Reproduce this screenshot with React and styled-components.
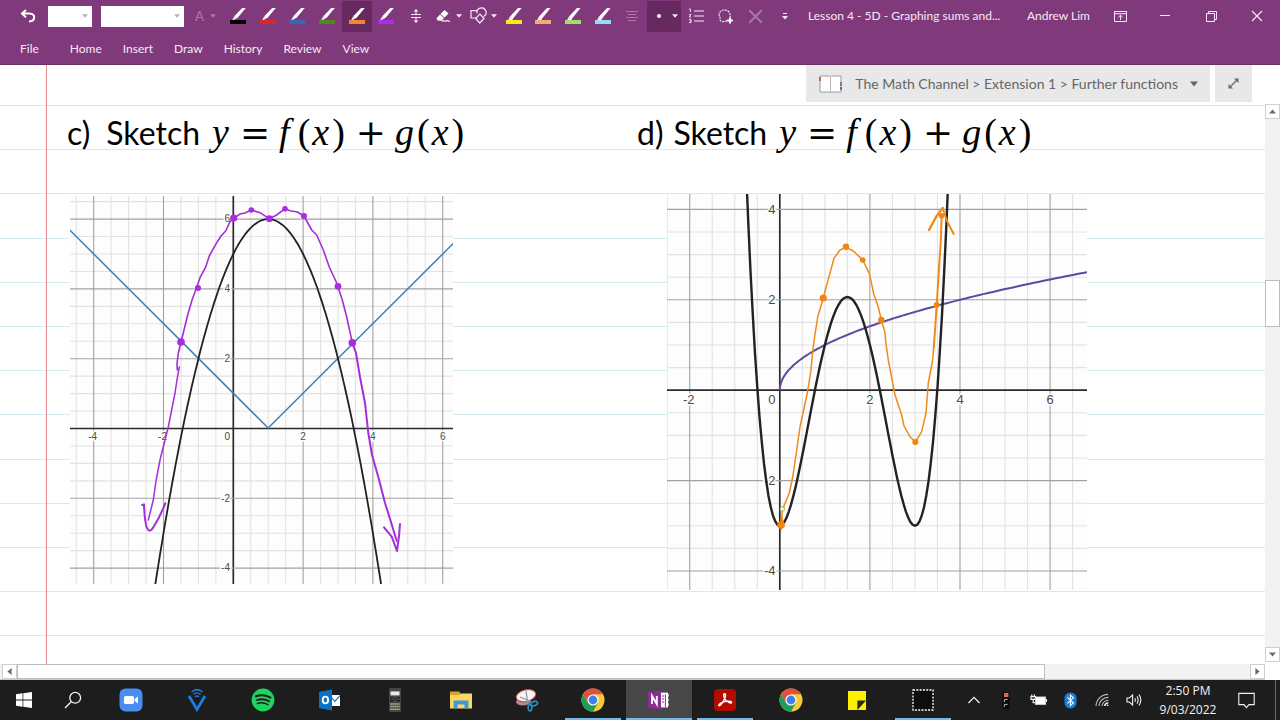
import React from 'react'
import styled, { createGlobalStyle } from 'styled-components'

const GlobalStyle = createGlobalStyle`
* { box-sizing: border-box; }
body {
  margin: 0;
  background: #fff;
  font-family: "Open Sans", "Noto Sans", sans-serif;
}
button, select {
  font-family: inherit;
  border: 0;
  padding: 0;
  background: none;
  color: inherit;
}
svg { display: block; flex: none; }
`

const Window = styled.div`
  display: flex;
  flex-direction: column;
  min-height: 100vh;
`

/* ---------- title bar and ribbon tabs ---------- */

const Header = styled.header`
  background: #80397b;
  color: #f6e9f5;
  border-bottom: 1px solid #6b2f67;
  font-family: Lato, "Open Sans", sans-serif;
`
const TitleBar = styled.div`
  display: flex;
  align-items: center;
  height: 32px;
  padding-left: 13px;
`
const ToolGroup = styled.div`
  display: flex;
  flex: none;
  width: ${p => p.$width}px;
  & > button { flex: 1; }
`
const Tool = styled.button`
  display: flex;
  flex: none;
  align-items: center;
  justify-content: center;
  gap: ${p => p.$gap || 0}px;
  width: ${p => p.$width || 30}px;
  height: 31px;
  background: ${p => p.$active ? '#67295f' : 'none'};
  opacity: ${p => p.$dim ? 0.35 : 1};
`
const FontBox = styled.span`
  display: flex;
  flex: none;
  align-items: center;
  justify-content: flex-end;
  width: ${p => p.$width}px;
  height: 21px;
  margin: 0 4px 0 5px;
  padding-right: 4px;
  background: #fff;
  color: #b9b2b8;
`
const FontSelect = styled.select`
  appearance: none;
  flex: 1;
  min-width: 0;
  height: 100%;
`
const DocTitle = styled.span`
  margin-left: 8px;
  font-size: 12px;
  line-height: 14px;
  white-space: nowrap;
`
const UserName = styled.button`
  margin-right: 8px;
  font-size: 12px;
  line-height: 14px;
  white-space: nowrap;
`
const WindowButtons = styled.div`
  display: flex;
  margin-left: auto;
`
const Tabs = styled.nav`
  display: flex;
  height: 32px;
  padding-left: 10px;
`
const Tab = styled.button`
  padding: 0 10px;
  margin-right: ${p => p.$first ? 11 : 1}px;
  font-size: 12px;
`

/* ---------- notebook page ---------- */

const Workspace = styled.main`
  flex: 1;
  display: grid;
  grid-template-columns: 1fr 15px;
  grid-template-rows: 1fr 16px;
`
const Page = styled.section`
  position: relative;
  overflow: hidden;
`
const Paper = styled.svg`
  position: absolute;
  top: 0;
  left: 0;
  width: 100%;
  height: 100%;
`
const PageContent = styled.div`
  position: relative;
`
const Location = styled.nav`
  display: flex;
  justify-content: flex-end;
  gap: 5px;
  padding-right: 13px;
`
const LocationButton = styled.button`
  display: flex;
  align-items: center;
  justify-content: center;
  height: 37px;
  padding: 0 12px;
  background: #e9e8e9;
  color: #666;
  font-family: Lato, "Open Sans", sans-serif;
  font-size: 14px;
`
const Crumbs = styled.span`
  margin: 0 12px;
`
const Problems = styled.div`
  display: grid;
  grid-template-columns: 570px 1fr;
  padding: 6px 0 0 67px;
`
const Problem = styled.article`
  min-width: 0;
`
const Question = styled.h2`
  display: flex;
  align-items: baseline;
  height: 48px;
  margin: 0;
  font: 400 32px/48px Lato, "Liberation Sans", sans-serif;
  color: #000;
  white-space: nowrap;
`
const Words = styled.span`
  margin-right: 12px;
`
const Part = styled.span`
  margin-right: ${p => p.$space}px;
`
const Sign = styled.span`
  margin: 0 9px 0 11px;
  font: 36px/48px "DejaVu Serif", serif;
`
const Argument = styled.span`
  i { margin: 0 3px 0 2px; }
`
const Maths = styled.span`
  display: inline-flex;
  align-items: baseline;
  font: 38px/48px "Liberation Serif", serif;
`
const Chart = styled.svg`
  margin: ${p => p.$margin};
`

/* ---------- scroll bars ---------- */

const VScroll = styled.div`
  display: flex;
  flex-direction: column;
  margin: 39px 0 2px;
  background: #f2f2f2;
`
const HScroll = styled.div`
  display: flex;
  padding-left: 2px;
  background: #f2f2f2;
  border-bottom: 1px solid #c9c9c9;
`
const Arrow = styled.button`
  display: flex;
  align-items: center;
  justify-content: center;
  width: 15px;
  height: 15px;
  flex: none;
  background: #fff;
  border: 1px solid #cfcfcf;
  color: #6a6a6a;
`
const Thumb = styled.div`
  flex: ${p => p.$grow};
  background: #fff;
  border: 1px solid #bdbdbd;
`
const Gap = styled.div`
  flex: ${p => p.$grow};
`

/* ---------- taskbar ---------- */

const Taskbar = styled.footer`
  display: flex;
  height: 40px;
  background: #1d1d1d;
  color: #f2f2f2;
`
const TaskButton = styled.button`
  position: relative;
  display: flex;
  flex: none;
  align-items: center;
  justify-content: center;
  width: ${p => p.$width || 66}px;
  background: ${p => p.$current ? '#474747' : 'none'};
  &::after {
    content: "";
    display: ${p => p.$open ? 'block' : 'none'};
    position: absolute;
    bottom: 0;
    left: ${p => p.$current ? 0 : 5}px;
    right: ${p => p.$current ? 0 : 5}px;
    height: 2px;
    background: #76b9e4;
  }
`
const Tray = styled.div`
  display: flex;
  flex: none;
  margin-left: auto;
`
const Clock = styled.button`
  width: 76px;
  font-size: 12px;
  line-height: 19px;
`
const ShowDesktop = styled.button`
  width: 5px;
  margin-left: 9px;
  border-left: 1px solid #6d6d6d;
`

/* ---------- small drawings ---------- */

const Caret = ({ w = 6, dir = 'down' }) => {
  const turn = { down: 0, up: 180, left: 90, right: 270 }[dir]
  return (
    <svg width={w} height={w} viewBox="0 0 10 10">
      <path d="M0 2H10L5 8Z" fill="currentColor" transform={`rotate(${turn} 5 5)`} />
    </svg>
  )
}

const Pen = ({ color, wide }) => (
  <svg width="18" height="20" viewBox="0 0 18 20">
    <path d={wide ? 'M16.5 2L13 2L5.5 10L3 14.5H7L8.5 12Z' : 'M16.8 2H13.2L6 9.6L3.6 14.2L8.6 11.8Z'} fill="#fff" />
    <path d="M3 14.6L5 10.4L7.4 12.6Z" fill="#f0dcee" />
    <rect x="1" y="14" width="16" height="4" fill={color} />
  </svg>
)

const stroke = { fill: 'none', stroke: 'currentColor', strokeWidth: 1.2 }

const Undo = () => (
  <svg width="16" height="16" viewBox="0 0 16 16" fill="none" stroke="#fff" strokeWidth="2">
    <path d="M6 2L2 5.5L6 9.4M2.4 5.6H9.6C16 5.6 15.6 13.4 9 13.4" />
  </svg>
)
const Spacing = () => (
  <svg width="12" height="16" viewBox="0 0 12 16" {...stroke}>
    <path d="M1 6.5H11M1 9.5H11M6 6V2M6 10V14" />
    <path d="M3.6 3.4L6 1L8.4 3.4ZM3.6 12.6L6 15L8.4 12.6Z" fill="currentColor" stroke="none" />
  </svg>
)
const Eraser = () => (
  <svg width="16" height="16" viewBox="0 0 16 16">
    <path d="M9.5 2L13.5 5.5L9.5 9.5L5.5 6Z" fill="#fff" />
    <path d="M5 6.5L9 10L6.6 12.8L2.6 12.6L1.4 10.4Z" fill="#fff" />
    <path d="M7 13.6C9 11 10 14.4 11.4 12.8C12.4 12 13.4 13.8 15 13" {...stroke} />
  </svg>
)
const Shapes = () => (
  <svg width="18" height="18" viewBox="0 0 18 18" {...stroke}>
    <path d="M8.4 11H2V3.6H8.4" />
    <path d="M8 6.4A4.6 4.6 0 1 1 14.6 9.6" />
    <path d="M10.8 7L15 11.4L10.8 16L6.6 11.4Z" />
  </svg>
)
const Lines = () => (
  <svg width="14" height="12" viewBox="0 0 14 12" {...stroke}>
    <path d="M1 1.5H13M3 4.5H11M1 7.5H13M3 10.5H11" />
  </svg>
)
const Numbered = () => (
  <svg width="16" height="16" viewBox="0 0 16 16" {...stroke}>
    <path d="M6 3H16M6 8H16M6 13H16" />
    <path d="M1 1H2.4V4M1 6.6H3L1.2 9H3.2M1 11.4H3V14.6H1M1.6 13H3" strokeWidth="0.9" />
  </svg>
)
const Lasso = () => (
  <svg width="17" height="16" viewBox="0 0 17 16" {...stroke}>
    <path d="M10 12.6C6 14.6 3.4 13.6 3 11.4C3.6 9 1.6 8 2.4 5.4C3.6 1.6 9 .6 12 4C13 6 13.6 7 13.2 9" strokeDasharray="2 1" />
    <path d="M13 9.6V15.4M10.2 12.5H15.8" strokeWidth="2" stroke="#fff" />
  </svg>
)
const Cross = ({ size = 12, width = 1.2 }) => (
  <svg width={size} height={size} viewBox="0 0 12 12" {...stroke} strokeWidth={width}>
    <path d="M1 1L11 11M11 1L1 11" />
  </svg>
)
const Customize = () => (
  <svg width="6" height="8" viewBox="0 0 6 8">
    <path d="M1 1H5V2H1ZM0 4H6L3 7.4Z" fill="currentColor" />
  </svg>
)
const RibbonOptions = () => (
  <svg width="13" height="11" viewBox="0 0 13 11" {...stroke} strokeWidth="1">
    <path d="M.5 .5H12.5V10.5H.5ZM.5 2.7H12.5M6.5 9V4.4M4.4 6.2L6.5 4.2L8.6 6.2" />
  </svg>
)
const Minimize = () => (
  <svg width="10" height="10" viewBox="0 0 10 10"><path d="M0 4.5H10" stroke="currentColor" /></svg>
)
const Restore = () => (
  <svg width="11" height="11" viewBox="0 0 11 11" {...stroke} strokeWidth="1">
    <path d="M.5 2.5H8.5V10.5H.5ZM2.5 2.5V.5H10.5V8.5H8.5" />
  </svg>
)
const Notebook = () => (
  <svg width="25" height="20" viewBox="0 0 25 20">
    <path d="M2 2H10Q12 2 12.5 3Q13 2 15 2H23V18H15Q13 18 12.5 18.6Q12 18 10 18H2Z" fill="#fff" stroke="#9a9a9a" />
    <path d="M12.5 3V18" stroke="#b5b5b5" />
    <path d="M2 3V7" stroke="#d24a35" strokeWidth="1.6" />
    <path d="M23 8V12" stroke="#3a77b8" strokeWidth="1.6" />
    <path d="M23 13V16" stroke="#555" strokeWidth="1.6" />
  </svg>
)
const Expand = () => (
  <svg width="13" height="13" viewBox="0 0 13 13">
    <path d="M3.5 9.5L9.5 3.5" stroke="#666" strokeWidth="1.3" />
    <path d="M7 1.5H11.5V6ZM1.5 7V11.5H6Z" fill="#666" />
  </svg>
)

/* ---------- taskbar icons ---------- */

const WindowsLogo = () => (
  <svg width="16" height="16" viewBox="0 0 16 16" fill="#fff">
    <path d="M0 2.2L6.6 1.3V7.6H0ZM7.3 1.2L16 0V7.6H7.3ZM0 8.4H6.6V14.7L0 13.8ZM7.3 8.4H16V16L7.3 14.8Z" />
  </svg>
)
const Search = () => (
  <svg width="18" height="18" viewBox="0 0 18 18" {...stroke} strokeWidth="1.3">
    <circle cx="11.2" cy="6.8" r="5.4" />
    <path d="M7.2 10.8L1 17" />
  </svg>
)
const ZoomIcon = () => (
  <svg width="24" height="24" viewBox="0 0 24 24">
    <rect x=".5" y=".5" width="23" height="23" rx="6" fill="#4a8cf0" />
    <rect x="5" y="8" width="10" height="8" rx="1.6" fill="#fff" />
    <path d="M15.6 11L19 8.4V15.6L15.6 13Z" fill="#fff" />
  </svg>
)
const VIcon = () => (
  <svg width="20" height="24" viewBox="0 0 20 24" fill="none" stroke="#1b7fe0">
    <path d="M2 8L10 21.4L18 8" strokeWidth="2.8" />
    <path d="M4.6 4Q10 -.6 15.4 4" strokeWidth="1.6" />
    <path d="M6.4 6.4Q10 3.4 13.6 6.4M8 8.8Q10 7.2 12 8.8" strokeWidth="1.4" />
  </svg>
)
const Spotify = () => (
  <svg width="24" height="24" viewBox="0 0 24 24" fill="none" stroke="#1d1d1d" strokeLinecap="round">
    <circle cx="12" cy="12" r="11.4" fill="#1fd35f" stroke="none" />
    <path d="M5 8.2Q12.6 5.8 19.4 9.6" strokeWidth="2.2" />
    <path d="M5.8 12Q12.4 10 18.2 13.2" strokeWidth="1.8" />
    <path d="M6.4 15.5Q12 13.8 17 16.6" strokeWidth="1.5" />
  </svg>
)
const Outlook = () => (
  <svg width="23" height="22" viewBox="0 0 23 22">
    <path d="M1 2.8L14 .6V21.4L1 19Z" fill="#0a72c4" />
    <ellipse cx="7.4" cy="11" rx="2.7" ry="3.4" fill="none" stroke="#fff" strokeWidth="1.9" />
    <rect x="14" y="6" width="8" height="11" fill="#fff" />
    <path d="M14 9L16.8 12.4L22 6.6" fill="none" stroke="#0a72c4" strokeWidth="1.1" />
  </svg>
)
const Calculator = () => (
  <svg width="12" height="24" viewBox="0 0 12 24">
    <rect width="12" height="24" x="0" y="0" rx="1" fill="#454545" />
    <rect x="1.5" y="3.4" width="9" height="4" fill="#e8ece6" />
    <path d="M1 10H4M8 10H11M5 11H7M1 12.6H4.4M7.6 12.6H11" stroke="#161616" strokeWidth="1.2" />
    <path d="M1.4 16H10.6M1.4 18.6H10.6M1.4 21.2H10.6" stroke="#c3c19a" strokeWidth="1.5" strokeDasharray="1.4 .6" />
  </svg>
)
const Folder = () => (
  <svg width="22" height="20" viewBox="0 0 22 20">
    <path d="M0 1.5H9L11 4H22V8H0Z" fill="#d9a520" />
    <path d="M0 5H9.5L11 3.4H22V18.4H0Z" fill="#fbd667" />
    <path d="M3.6 18.6V10.6H18.4V18.6H14.4V14.6H7.6V18.6Z" fill="#3e9ad6" />
  </svg>
)
const Snip = () => (
  <svg width="24" height="24" viewBox="0 0 24 24">
    <ellipse cx="8" cy="14" rx="7" ry="3.4" fill="#b08a8c" />
    <ellipse cx="11" cy="7.6" rx="10" ry="5.8" fill="#f5f3f4" stroke="#c9404b" transform="rotate(-14 11 7.6)" />
    <path d="M11 3L12.6 14M5 9L16 13.6" stroke="#8d9aa3" strokeWidth="1.3" />
    <ellipse cx="19" cy="15.6" rx="3.6" ry="2.1" fill="none" stroke="#2e8ac4" strokeWidth="1.7" transform="rotate(-18 19 15.6)" />
    <ellipse cx="15" cy="19.6" rx="1.9" ry="3.3" fill="none" stroke="#2e8ac4" strokeWidth="1.7" />
  </svg>
)
const Chrome = () => (
  <svg width="24" height="24" viewBox="0 0 24 24">
    <circle cx="12" cy="12" r="11.5" fill="#fbc934" />
    <path d="M12 12L2.04 6.25A11.5 11.5 0 0 1 21.96 6.25H12Z" fill="#dd5144" />
    <path d="M2.04 6.25A11.5 11.5 0 0 0 12 23.5L17 14.9L12 12L7 14.9Z" fill="#1f9d58" />
    <path d="M2.04 6.25L7 14.9L12 6.25Z" fill="#dd5144" />
    <circle cx="12" cy="12" r="5.6" fill="#fff" />
    <circle cx="12" cy="12" r="4.4" fill="#3f80ea" />
  </svg>
)
const OneNote = () => (
  <svg width="22" height="20" viewBox="0 0 22 20">
    <path d="M12 2.6H20V17.4H12Z" fill="#fff" />
    <path d="M20.4 4V6.6M20.4 8.6V11.2M20.4 13.2V15.8" stroke="#d9bfe0" />
    <path d="M17.4 4.4V17M14 6H16M14 9H16M14 12H16" stroke="#7c2c84" />
    <path d="M0 2L13 .4V19.6L0 18Z" fill="#8a2d91" />
    <path d="M4 14V6L8.8 14V6" fill="none" stroke="#fff" strokeWidth="1.9" />
  </svg>
)
const Acrobat = () => (
  <svg width="22" height="22" viewBox="0 0 22 22">
    <rect width="22" height="22" rx="4" fill="#b30b00" />
    <path d="M10.4 4.6C12.4 4.6 11.6 8.6 9.2 12.4C7.4 15.4 5.4 17.4 4.8 16.6C4 15.4 8.6 12.6 12.6 12.2C16 11.8 18 12.6 17.6 13.6C17 14.8 12.8 13 11 10C9.4 7.2 9.2 4.8 10.4 4.6Z" fill="none" stroke="#fff" strokeWidth="1.4" />
  </svg>
)
const StickyNote = () => (
  <svg width="18" height="19" viewBox="0 0 18 19">
    <path d="M0 0H18V19H0Z" fill="#fef000" />
    <path d="M9.4 19V9.6H18Z" fill="#2a2a12" />
    <path d="M10.6 19L18 11V19Z" fill="#fef000" />
  </svg>
)
const Dashed = () => (
  <svg width="22" height="22" viewBox="0 0 22 22">
    <rect x="1" y="1" width="20" height="20" fill="#0d0d0d" stroke="#fff" strokeWidth="1.3" strokeDasharray="2 1.3" />
  </svg>
)
const ChevronUp = () => (
  <svg width="12" height="8" viewBox="0 0 12 8" {...stroke} strokeWidth="1.3"><path d="M.5 7L6 1.4L11.5 7" /></svg>
)
const Traffic = () => (
  <svg width="8" height="17" viewBox="0 0 8 17">
    <rect width="7" height="17" x=".5" fill="#0a0a0a" />
    <rect x="2" y="1" width="4.4" height="4" fill="#e0694a" />
    <path d="M2.4 10V7.4H5.6M2.4 15V12.4H5.6" stroke="#b9b9b9" fill="none" />
  </svg>
)
const Battery = () => (
  <svg width="17" height="14" viewBox="0 0 17 14">
    <rect x="5.5" y="4" width="10" height="7.4" fill="#fff" stroke="#cfcfcf" />
    <rect x="16" y="6" width="1" height="3" fill="#fff" />
    <path d="M1 3.6H5.4V6.4H1ZM1.8 3.4V1.4M4.4 3.4V1.4M3.2 6.6V9.6H5" {...stroke} />
  </svg>
)
const Bluetooth = () => (
  <svg width="13" height="17" viewBox="0 0 13 17">
    <rect x=".5" y=".5" width="12" height="16" rx="5.6" fill="#1480dc" />
    <path d="M3.4 5.4L9.4 11L6.4 13.6V3.2L9.4 5.8L3.4 11.4" fill="none" stroke="#fff" strokeWidth="1.1" />
  </svg>
)
const Wifi = () => (
  <svg width="15" height="14" viewBox="0 0 15 14" {...stroke} strokeWidth="1.1">
    <path d="M1 13A12 12 0 0 1 13 1.4M4 13A9 9 0 0 1 13.4 4.4M7 13A6.4 6.4 0 0 1 13.4 7.4" opacity=".75" />
    <path d="M9.8 13A3.4 3.4 0 0 1 13.2 10" strokeWidth="1.6" />
    <rect x="12" y="11.6" width="1.4" height="1.4" fill="currentColor" stroke="none" />
  </svg>
)
const Volume = () => (
  <svg width="16" height="14" viewBox="0 0 16 14" {...stroke} strokeWidth="1.1">
    <path d="M1 5H3.4L6.6 2V12L3.4 9H1Z" />
    <path d="M8.8 5.2Q10 7 8.8 8.8M11 3.4Q13.2 7 11 10.6M13 1.6Q16.6 7 13 12.4" />
  </svg>
)
const Notifications = () => (
  <svg width="17" height="17" viewBox="0 0 17 17" {...stroke} strokeWidth="1.1">
    <path d="M.8 1.4H16.2V12.6H11L8.4 15.6L6 12.6H.8Z" />
  </svg>
)

/* ---------- graphs ---------- */

const line = pts => 'M' + pts.map(([x, y]) => `${x.toFixed(1)} ${y.toFixed(1)}`).join('L')

const plot = (f, from, to, g) => {
  const pts = []
  for (let x = from; x <= to + 0.0001; x += 0.05) {
    pts.push([g.ox + x * g.ux, g.oy - f(x) * g.uy])
  }
  return line(pts)
}

const range = (from, to) => Array.from({ length: to - from + 1 }, (_, i) => from + i)

const Grid = ({ g }) => {
  const xs = range(Math.ceil((g.left - g.ox) / g.ux * 2), Math.floor((g.left + g.width - g.ox) / g.ux * 2))
  const ys = range(Math.ceil((g.oy - g.top - g.height) / g.uy * 2), Math.floor((g.oy - g.top) / g.uy * 2))
  const shade = n => n === 0 ? '#2a2a2a' : n % 4 === 0 ? '#a2a2a2' : '#e2e2e2'
  const weight = n => n === 0 ? 1.7 : 1.1
  return (
    <g>
      <rect x={g.left} y={g.top} width={g.width} height={g.height} fill="#fdfdfd" />
      {[false, true].map(major => (
        <g key={String(major)}>
          {xs.filter(n => (n % 4 === 0) === major).map(n => (
            <path key={n} d={`M${g.ox + n * g.ux / 2} ${g.top}v${g.height}`} stroke={shade(n)} strokeWidth={weight(n)} />
          ))}
          {ys.filter(n => (n % 4 === 0) === major).map(n => (
            <path key={n} d={`M${g.left} ${g.oy - n * g.uy / 2}h${g.width}`} stroke={shade(n)} strokeWidth={weight(n)} />
          ))}
        </g>
      ))}
    </g>
  )
}

const Labels = ({ g, xs, ys, size }) => (
  <g fontFamily="Liberation Sans, sans-serif" fontSize={size} fill="#4a4a4a" stroke="#fdfdfd" strokeWidth="3" paintOrder="stroke">
    {xs.map(n => (
      <text key={n} x={g.ox + n * g.ux - (n < 0 ? 1 : 0)} y={g.oy + size + 1} textAnchor="middle">{n}</text>
    ))}
    {ys.map(n => (
      <text key={n} x={g.ox - size / 3} y={g.oy - n * g.uy + size / 3} textAnchor="end">{n}</text>
    ))}
    <text x={g.ox - size / 3} y={g.oy + size + 1} textAnchor="end">0</text>
  </g>
)

const Dots = ({ list, color }) => (
  <g fill={color}>
    {list.map(([x, y, r]) => <circle key={x} cx={x} cy={y} r={r} />)}
  </g>
)

const left = { left: 70, top: 196, width: 383, height: 388, ox: 233.3, oy: 428.5, ux: 34.9, uy: 34.9 }
const right = { left: 667, top: 194, width: 420, height: 396, ox: 779.8, oy: 390.2, ux: 45.05, uy: 45.2 }

const GraphC = () => (
  <Chart $margin="40px 0 0 3px" width="383" height="388" viewBox="70 196 383 388" role="img" aria-label="Parabola and absolute value graph">
    <Grid g={left} />
    <Labels g={left} xs={[-4, -2, 2, 4, 6]} ys={[6, 4, 2, -2, -4]} size={10} />
    <path d={line([[65, 225.3], [268.2, 428], [455, 241.7]])} fill="none" stroke="#3f7fb5" strokeWidth="1.5" />
    <path d={plot(x => 6 - (x - 1) ** 2, -2.4, 4.4, left)} fill="none" stroke="#222" strokeWidth="1.8" />
    <g fill="none" stroke="#a32fd8" strokeLinecap="round" strokeLinejoin="round">
      <path strokeWidth="1.6" d="M177.3 370L177 364L178.3 353L181 342L184 330L187.7 315L192 300L196.5 288L200 277.7L205.7 267L209.3 256L216.7 242.7L221 236L225.7 231L230 221.7L233.7 218.3L240 214L245 213L251.3 210L260 212.7L269.3 218.7L276.7 215L285 208.7L290 210.7L297.3 212L304 216L311.7 230L316.7 235L323.3 250L329.3 267L336.7 283L342.3 300L346.7 317L352.3 342.7" />
      <path strokeWidth="2" d="M352.3 342.7L356 353L360 377L365 403L368.3 433L372 455L378.3 477L385 503L391 522L396.7 541" />
      <path strokeWidth="1.5" d="M179.3 367L177 380L175 393L168.3 427L160 460L156 481L153.3 500L148.3 520" />
      <path strokeWidth="2" d="M142.3 505L144 504.3Q144.3 516 146 525Q148.7 535 153.3 527.3Q160 517 165.3 503.3" />
      <path strokeWidth="2" d="M384 527.3L391.7 536.7L397 551L399 536L400 524" />
    </g>
    <Dots color="#a92be2" list={[[181, 342, 3.8], [198, 288, 3], [233.7, 218, 3.6], [251.3, 210, 2.8], [269.3, 218.7, 3.4], [285, 208.7, 2.8], [304, 216, 3], [338, 286.3, 3.4], [352.3, 342.7, 3.8]]} />
  </Chart>
)

const GraphD = () => (
  <Chart $margin="38px 0 0 30px" width="420" height="396" viewBox="667 194 420 396" role="img" aria-label="Quartic and square root graph">
    <Grid g={right} />
    <Labels g={right} xs={[-2, 2, 4, 6]} ys={[4, 2, -2, -4]} size={13} />
    <path d={line(range(0, 105).map(i => [right.ox + (i / 40) ** 2 * right.ux, right.oy - i / 40 * right.uy]))} fill="none" stroke="#5d4ba0" strokeWidth="2" />
    <path d={plot(x => x * x * (x - 3) ** 2 - 3, -0.8, 3.8, right)} fill="none" stroke="#222" strokeWidth="2.4" />
    <g fill="none" stroke="#ef8a1d" strokeLinecap="round" strokeLinejoin="round">
      <path strokeWidth="1.5" d="M781 526L782.3 511L784.3 505L789.3 493L792.7 477L796.7 450L800 427L807.3 393L811 370L812.3 355L814 341L817.7 317L823.3 298L827 284L830 273L834 258.3L840 250L846 247.4L853.3 251L862.7 260L869.3 273.3L874 295L878.3 307L881.3 320L884.7 331L886 344L888.3 360L895 395L901.7 415L904 426L910 436.7L915.3 442L921.7 431.7L926 413L928.3 383L932.7 360L934 342" />
      <path strokeWidth="2" d="M933.8 348L935.7 320L936.7 305L938.7 273L940.7 243L941.7 215" />
      <path strokeWidth="2.4" d="M929 230L936 217L942.7 208" />
      <path strokeWidth="2" d="M942.7 208L947 221L953.7 234" />
    </g>
    <Dots color="#f0860f" list={[[823.3, 298, 3.6], [846, 246.7, 3.2], [862.7, 260, 2.8], [881.3, 320, 3.2], [915.3, 442, 3], [936.7, 305, 3], [941.7, 215.7, 2.8], [781, 525, 3.8]]} />
    <path d="M780 519L782.4 517.6L784.6 524L781 531Z" fill="#f0860f" />
    <circle cx="782.3" cy="509" r="2.2" fill="#fdfdfd" stroke="#a9a83a" />
  </Chart>
)

const Formula = () => (
  <Maths>
    <i>y</i>
    <Sign>=</Sign>
    <Part $space={8}><i>f</i></Part>
    <Argument>(<i>x</i>)</Argument>
    <Sign>+</Sign>
    <Part $space={3}><i>g</i></Part>
    <Argument>(<i>x</i>)</Argument>
  </Maths>
)

const pens = ['#000000', '#e0242c', '#3468b4', '#4a8a1e', '#f0862a', '#b02be8']
const highlighters = ['#ffe81a', '#f4ab70', '#9fe06a', '#92dcf8']
const tabs = ['File', 'Home', 'Insert', 'Draw', 'History', 'Review', 'View']
const apps = [
  ['Zoom', ZoomIcon], ['ViewBoard', VIcon], ['Spotify', Spotify], ['Outlook', Outlook],
  ['Calculator', Calculator], ['File Explorer', Folder], ['Snipping Tool', Snip],
  ['Chrome', Chrome, 'open'], ['OneNote', OneNote, 'current'], ['Acrobat', Acrobat, 'open'],
  ['Chrome', Chrome], ['Sticky Notes', StickyNote], ['Screen snip', Dashed, 'open'],
]
const tray = [
  ['Show hidden icons', ChevronUp], ['Status', Traffic], ['Battery', Battery],
  ['Bluetooth', Bluetooth], ['Network', Wifi], ['Volume', Volume],
]

const App = () => {
  return (
    <Window>
      <GlobalStyle />
      <Header>
        <TitleBar>
          <Tool aria-label="Undo"><Undo /></Tool>
          <FontBox $width={44}><FontSelect aria-label="Font size" /><Caret /></FontBox>
          <FontBox $width={83}><FontSelect aria-label="Font" /><Caret /></FontBox>
          <Tool $width={35} $gap={6} $dim aria-label="Font colour"><span>A</span><Caret /></Tool>
          <ToolGroup $width={208}>
            {pens.map((color, i) => (
              <Tool key={color} $active={i === 4} aria-label={`Pen ${i + 1}`}><Pen color={color} /></Tool>
            ))}
            <Tool aria-label="Insert space"><Spacing /></Tool>
          </ToolGroup>
          <Tool $width={35} $gap={5} aria-label="Eraser"><Eraser /><Caret /></Tool>
          <Tool $width={33} $gap={4} aria-label="Shapes"><Shapes /><Caret /></Tool>
          <ToolGroup $width={148}>
            {highlighters.map((color, i) => (
              <Tool key={color} aria-label={`Highlighter ${i + 1}`}><Pen color={color} wide /></Tool>
            ))}
            <Tool $dim aria-label="Align"><Lines /></Tool>
          </ToolGroup>
          <Tool $width={34} $gap={10} $active aria-label="Bullets">
            <svg width="12" height="6" viewBox="0 0 12 6"><circle cx="9" cy="3" r="2" fill="#fff" /></svg>
            <Caret />
          </Tool>
          <ToolGroup $width={119}>
            <Tool aria-label="Numbering"><Numbered /></Tool>
            <Tool aria-label="Lasso select"><Lasso /></Tool>
            <Tool $dim aria-label="Delete"><Cross size={15} width={1.6} /></Tool>
            <Tool aria-label="Customise toolbar"><Customize /></Tool>
          </ToolGroup>
          <DocTitle>Lesson 4 - 5D - Graphing sums and...</DocTitle>
          <WindowButtons>
            <UserName>Andrew Lim</UserName>
            <Tool $width={44} aria-label="Ribbon display options"><RibbonOptions /></Tool>
            <Tool $width={46} aria-label="Minimise"><Minimize /></Tool>
            <Tool $width={46} aria-label="Restore"><Restore /></Tool>
            <Tool $width={46} aria-label="Close"><Cross /></Tool>
          </WindowButtons>
        </TitleBar>
        <Tabs>
          {tabs.map((name, i) => <Tab key={name} $first={i === 0}>{name}</Tab>)}
        </Tabs>
      </Header>

      <Workspace>
        <Page>
          <Paper aria-hidden="true">
            {range(0, 30).map(i => (
              <rect key={i} x="0" y={40 + Math.round(i * 44.2)} width="100%" height="1" fill="#d3ebf1" />
            ))}
            <rect x="46" y="0" width="1" height="100%" fill="#e58a8e" />
          </Paper>
          <PageContent>
            <Location>
              <LocationButton>
                <Notebook />
                <Crumbs>The Math Channel &gt; Extension 1 &gt; Further functions</Crumbs>
                <Caret w={8} />
              </LocationButton>
              <LocationButton aria-label="Full page view"><Expand /></LocationButton>
            </Location>
            <Problems>
              <Problem>
                <Question><Part $space={16}>c)</Part><Words>Sketch</Words><Formula /></Question>
                <GraphC />
              </Problem>
              <Problem>
                <Question><Part $space={10}>d)</Part><Words>Sketch</Words><Formula /></Question>
                <GraphD />
              </Problem>
            </Problems>
          </PageContent>
        </Page>
        <VScroll>
          <Arrow aria-label="Scroll up"><Caret w={7} dir="up" /></Arrow>
          <Gap $grow={161} />
          <Thumb $grow={45} />
          <Gap $grow={321} />
          <Arrow aria-label="Scroll down"><Caret w={7} /></Arrow>
        </VScroll>
        <HScroll>
          <Arrow aria-label="Scroll left"><Caret w={7} dir="left" /></Arrow>
          <Thumb $grow={1027} />
          <Gap $grow={205} />
          <Arrow aria-label="Scroll right"><Caret w={7} dir="right" /></Arrow>
        </HScroll>
      </Workspace>

      <Taskbar>
        <TaskButton $width={48} aria-label="Start"><WindowsLogo /></TaskButton>
        <TaskButton $width={50} aria-label="Search"><Search /></TaskButton>
        {apps.map(([name, Icon, state], i) => (
          <TaskButton key={i} aria-label={name} $open={!!state} $current={state === 'current'}><Icon /></TaskButton>
        ))}
        <Tray>
          {tray.map(([name, Icon]) => (
            <TaskButton key={name} $width={32} aria-label={name}><Icon /></TaskButton>
          ))}
          <Clock>2:50 PM<br />9/03/2022</Clock>
          <TaskButton $width={40} aria-label="Notifications"><Notifications /></TaskButton>
          <ShowDesktop aria-label="Show desktop" />
        </Tray>
      </Taskbar>
    </Window>
  )
}

export default App
